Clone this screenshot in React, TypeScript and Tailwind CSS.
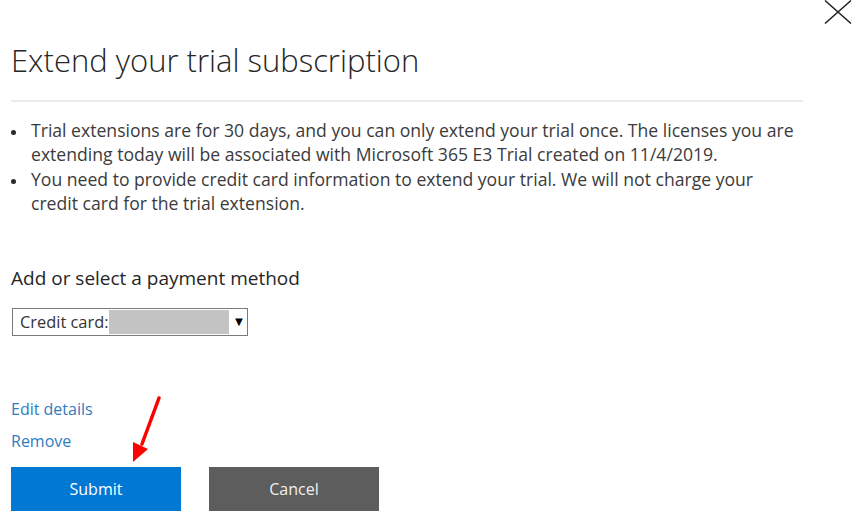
const font = { fontFamily: '"Open Sans", "Noto Sans", sans-serif' };

const Bullet = () => (
  <span className="w-[20px] shrink-0 pt-[12px]">
    <span className="block w-[5px] h-[5px] rounded-full bg-[#2b2b2b]" />
  </span>
);

export default function App() {
  return (
    <div className="relative w-[860px] h-[520px] bg-white overflow-hidden text-[#333333]" style={font}>
      {/* close */}
      <div className="flex justify-end h-[25px] pr-[8px]">
        <svg width="28" height="24" viewBox="0 0 28 24" className="text-[#222]">
          <path d="M1 0.5 L27 23.5 M27 0.5 L1 23.5" stroke="currentColor" strokeWidth="1.5" fill="none" />
        </svg>
      </div>

      <div className="pl-[11px]">
        <h1 className="mt-[15px] text-[31px] leading-[40px] font-light text-[#262626]">
          Extend your trial subscription
        </h1>
        <div className="mt-[20px] h-[2px] w-[792px] bg-[#ebebeb]" />

        <ul className="mt-[15.5px] text-[17.6px] leading-[24.5px] text-[#3b3b3b]">
          <li className="flex">
            <Bullet />
            <span className="whitespace-nowrap">
              Trial extensions are for 30 days, and you can only extend your trial once. The licenses you are
              <br />
              extending today will be associated with Microsoft 365 E3 Trial created on 11/4/2019.
            </span>
          </li>
          <li className="flex">
            <Bullet />
            <span className="whitespace-nowrap">
              You need to provide credit card information to extend your trial. We will not charge your
              <br />
              credit card for the trial extension.
            </span>
          </li>
        </ul>

        <h2 className="mt-[49px] text-[19px] leading-[26px] text-[#262626]">Add or select a payment method</h2>

        <div className="mt-[17.4px] ml-[1px] flex items-center w-[236px] h-[28px] border border-[#7a7a7a] p-[1px]">
          <span className="pl-[6px] text-[16.4px] leading-none text-[#333]">Credit card:</span>
          <span className="ml-[1px] h-full w-[120px] bg-[#c4c4c4]" />
          <span className="ml-[3px] text-[13px] leading-none text-black">▼</span>
        </div>

        <div className="mt-[62.8px] flex flex-col items-start text-[16px] leading-[20px] text-[#2f7cc0]">
          <a className="cursor-pointer">Edit details</a>
          <a className="mt-[12px] cursor-pointer">Remove</a>
        </div>

        <div className="mt-[16.2px] flex gap-[28px]">
          <button className="w-[170px] h-[44px] bg-[#0078d4] text-white text-[16px]">Submit</button>
          <button className="w-[170px] h-[44px] bg-[#5d5d5d] text-[#f0f0f0] text-[16px]">Cancel</button>
        </div>
      </div>

      {/* annotation arrow */}
      <svg className="absolute left-[120px] top-[392px]" width="50" height="76" viewBox="0 0 50 76">
        <path d="M39 6 L22 52" stroke="#ff0000" strokeWidth="3.5" strokeLinecap="round" fill="none" />
        <path d="M13 70 L13 50 L28 57 Z" fill="#ff0000" />
      </svg>
    </div>
  );
}
